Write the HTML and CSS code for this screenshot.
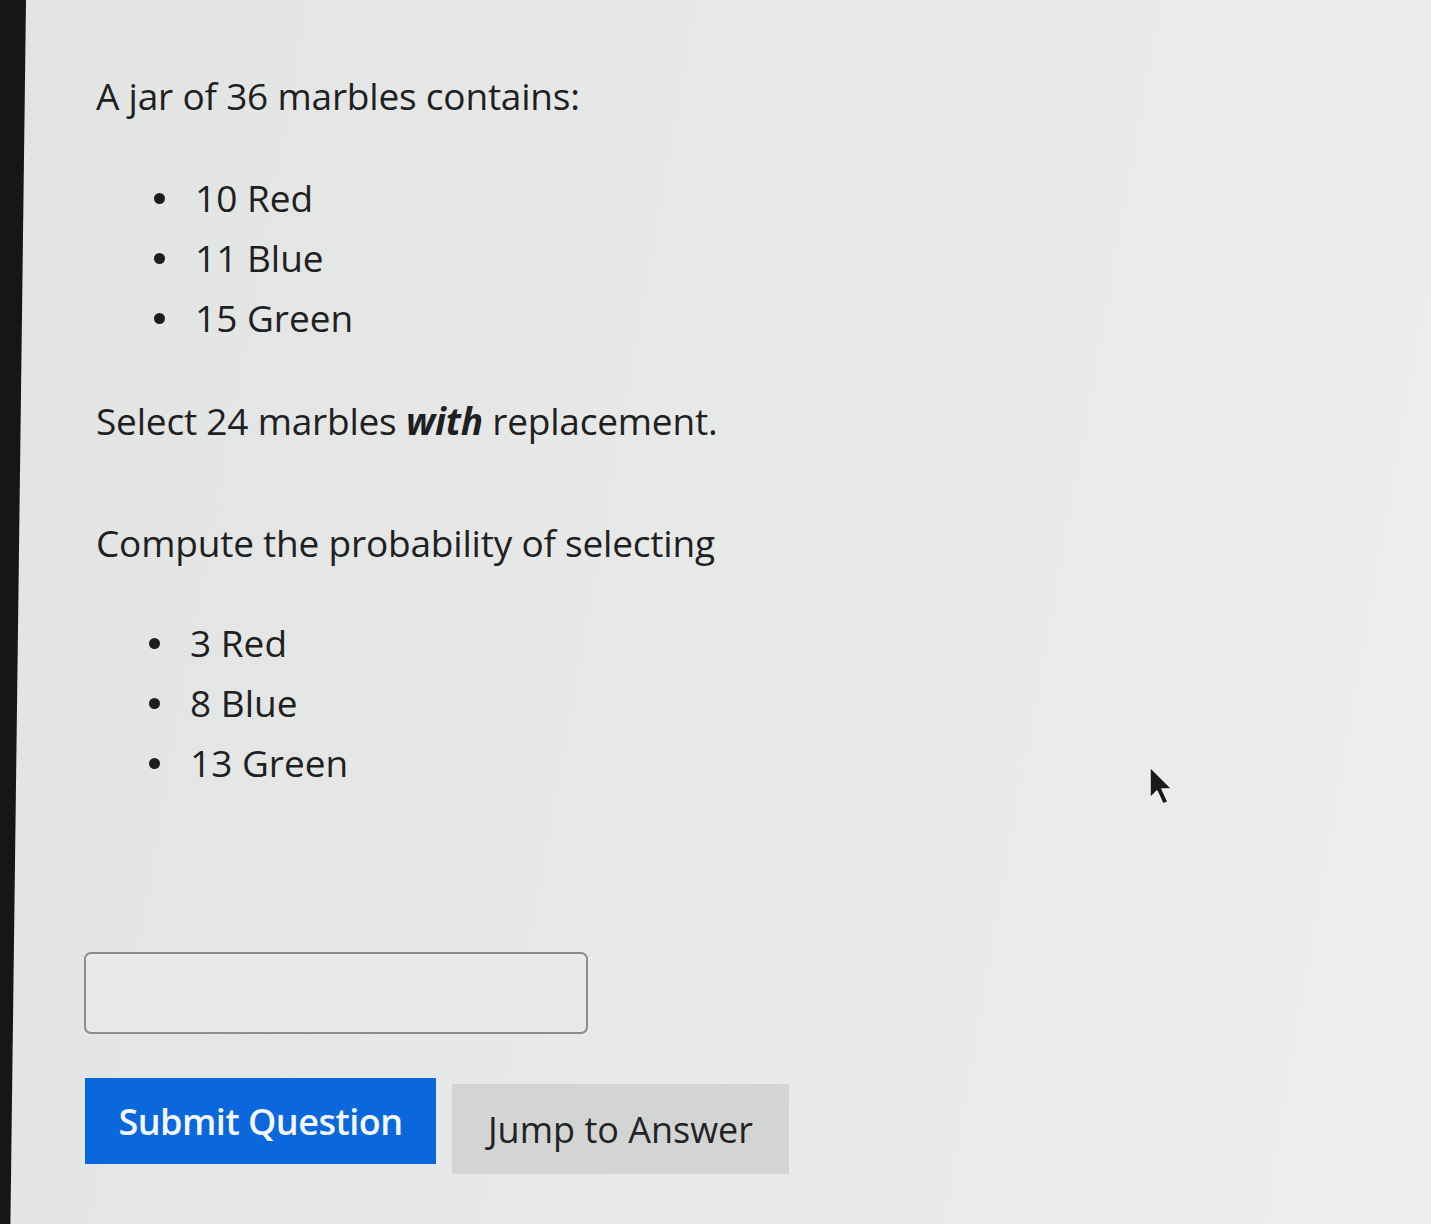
FILE: index.html
```html
<!DOCTYPE html>
<html lang="en">
<head>
<meta charset="utf-8">
<title>Marbles question</title>
<link rel="stylesheet" href="styles.css">
</head>
<body>
<div class="screen">
  <div class="bezel"></div>
  <main class="question">
    <p class="line intro">A jar of 36 marbles contains:</p>
    <ul class="items first">
      <li>10 Red</li>
      <li>11 Blue</li>
      <li>15 Green</li>
    </ul>
    <p class="line select">Select 24 marbles <em class="strong">with</em> replacement.</p>
    <p class="line compute">Compute the probability of selecting</p>
    <ul class="items second">
      <li>3 Red</li>
      <li>8 Blue</li>
      <li>13 Green</li>
    </ul>
    <div class="answer"></div>
    <div class="actions">
      <button class="btn submit">Submit Question</button>
      <button class="btn jump">Jump to Answer</button>
    </div>
  </main>
  <svg class="cursor" width="30" height="46" viewBox="0 0 30 46">
    <path d="M3 2 L3 33 L10 26 L16 39 L21 37 L15 24 L25 24 Z" fill="#1a1a1a" stroke="#f2f2f2" stroke-width="1.5" stroke-linejoin="round"/>
  </svg>
</div>
</body>
</html>
```
FILE: styles.css
```css
html, body {
  margin: 0;
  padding: 0;
}
body {
  width: 1431px;
  height: 1224px;
  overflow: hidden;
  background: #e5e7e7;
  font-family: "Open Sans", "Noto Sans", sans-serif;
  color: #1f2021;
}
.screen {
  position: relative;
  display: flex;
  height: 1224px;
  background: linear-gradient(100deg, #e2e4e4 0%, #e7e9e9 45%, #eceeee 100%);
}
.bezel {
  width: 26px;
  flex: 0 0 26px;
  background: #161616;
  clip-path: polygon(0 0, 100% 0, 40% 100%, 0 100%);
}
.question {
  padding-left: 70px;
  padding-top: 71px;
  flex: 1;
}
.line {
  margin: 0;
  font-size: 37px;
  line-height: 50px;
  letter-spacing: -0.2px;
}
.strong {
  font-weight: 700;
  font-style: italic;
}
.items {
  list-style: none;
  margin: 0;
  padding: 0 0 0 58px;
  font-size: 37px;
  line-height: 60px;
}
.items li {
  display: flex;
  align-items: center;
}
.items li::before {
  content: "";
  width: 11px;
  height: 11px;
  border-radius: 50%;
  background: #1c1d1e;
  margin-right: 30px;
}
.first { margin-top: 47px; }
.select { margin-top: 48px; }
.compute { margin-top: 72px; }
.second { margin-top: 45px; }
.second li::before { margin-left: -5px; }
.answer {
  margin-top: 159px;
  margin-left: -12px;
  width: 500px;
  height: 78px;
  border: 2px solid #8a8c8d;
  border-radius: 7px;
  background: #e8eaea;
}
.actions {
  display: flex;
  align-items: flex-start;
  gap: 16px;
  margin-top: 44px;
  margin-left: -11px;
}
.btn {
  font-family: "Open Sans", "Noto Sans", sans-serif;
  font-size: 36px;
  border: none;
  padding: 0;
  display: flex;
  align-items: center;
  justify-content: center;
}
.submit {
  width: 351px;
  height: 86px;
  background: #0b68dc;
  color: #f4f7fb;
  font-weight: 600;
  letter-spacing: -0.5px;
}
.jump {
  margin-top: 6px;
  width: 337px;
  height: 90px;
  background: #d3d5d5;
  color: #222324;
  font-weight: 400;
}
.cursor {
  position: absolute;
  left: 1147px;
  top: 765px;
}
```
